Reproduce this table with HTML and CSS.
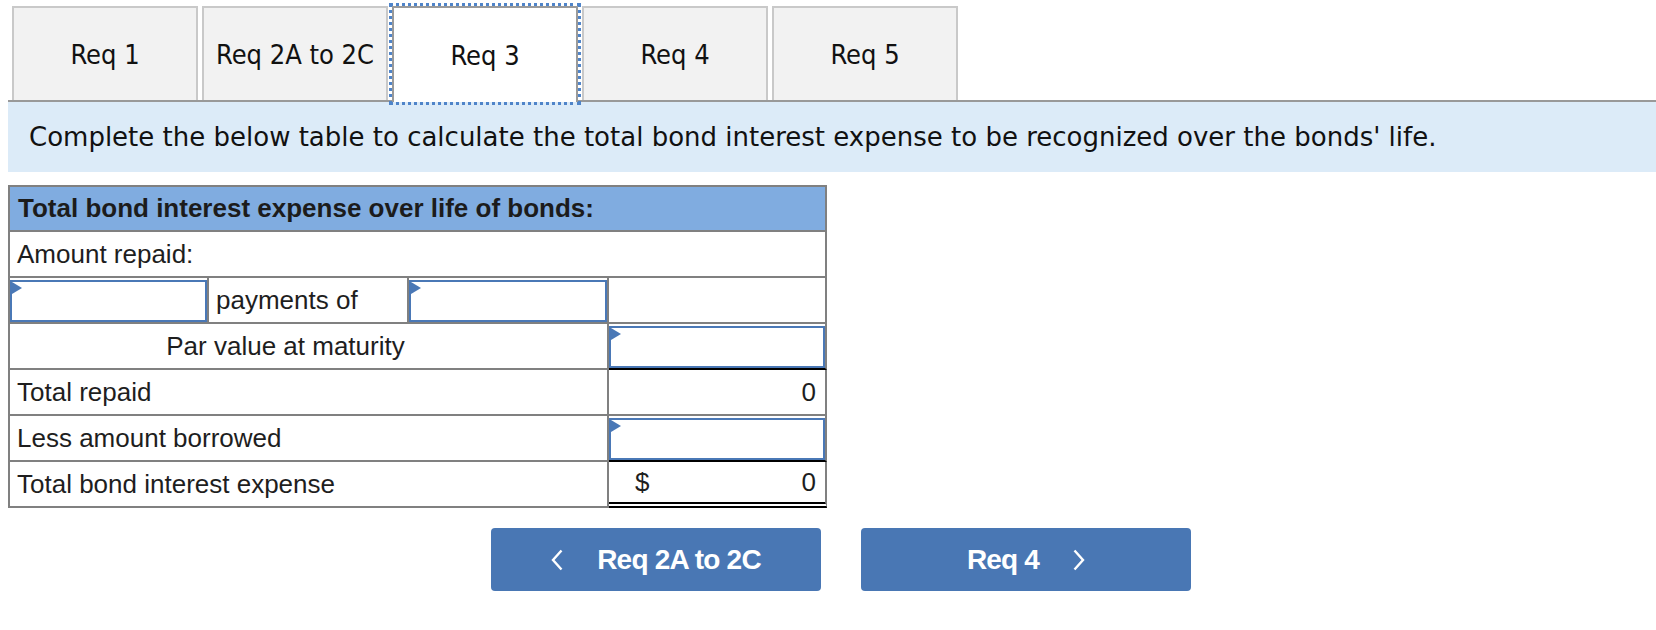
FILE: index.html
```html
<!DOCTYPE html>
<html lang="en">
<head>
<meta charset="utf-8">
<title>Req 3</title>
<link rel="stylesheet" href="styles.css">
</head>
<body>
<div class="page">
  <nav class="tabs">
    <button class="tab">Req 1</button>
    <button class="tab">Req 2A to 2C</button>
    <button class="tab active">Req 3</button>
    <button class="tab">Req 4</button>
    <button class="tab">Req 5</button>
  </nav>
  <div class="instruction">Complete the below table to calculate the total bond interest expense to be recognized over the bonds' life.</div>
  <table class="calc">
    <colgroup>
      <col class="c1"><col class="c2"><col class="c3"><col class="c4">
    </colgroup>
    <tr class="head"><th colspan="4">Total bond interest expense over life of bonds:</th></tr>
    <tr><td colspan="4" class="label">Amount repaid:</td></tr>
    <tr>
      <td class="in"><div class="input"></div></td>
      <td class="label">payments of</td>
      <td class="in"><div class="input"></div></td>
      <td class="val"></td>
    </tr>
    <tr>
      <td colspan="3" class="label center">Par value at maturity</td>
      <td class="in sum-above"><div class="input"></div></td>
    </tr>
    <tr>
      <td colspan="3" class="label">Total repaid</td>
      <td class="val num">0</td>
    </tr>
    <tr>
      <td colspan="3" class="label">Less amount borrowed</td>
      <td class="in sum-above"><div class="input"></div></td>
    </tr>
    <tr>
      <td colspan="3" class="label">Total bond interest expense</td>
      <td class="val num total"><span class="cur">$</span><span class="amt">0</span></td>
    </tr>
  </table>
  <div class="nav-buttons">
    <button class="navbtn">
      <svg class="chev" width="12" height="22" viewBox="0 0 12 22"><path d="M10.5 1.5 L2 11 L10.5 20.5" fill="none" stroke="#fff" stroke-width="2.4"/></svg>
      <span>Req 2A to 2C</span>
    </button>
    <button class="navbtn">
      <span>Req 4</span>
      <svg class="chev" width="12" height="22" viewBox="0 0 12 22"><path d="M1.5 1.5 L10 11 L1.5 20.5" fill="none" stroke="#fff" stroke-width="2.4"/></svg>
    </button>
  </div>
</div>
</body>
</html>
```

FILE: styles.css
```css
html, body {
  margin: 0;
  padding: 0;
  background: #fff;
}

.page {
  padding-left: 8px;
  font-family: "Liberation Sans", Arial, sans-serif;
  color: #1e1e1e;
}

.tabs {
  display: flex;
  align-items: flex-start;
  gap: 4px;
  padding: 6px 0 0 4px;
  height: 102px;
  box-sizing: border-box;
  border-bottom: 2px solid #999;
}

.tab {
  width: 186px;
  height: 94px;
  box-sizing: border-box;
  margin: 0;
  padding: 0;
  background: #f2f2f2;
  border: 2px solid #c9c9c9;
  border-bottom: none;
  font-family: "DejaVu Sans Condensed", "DejaVu Sans", sans-serif;
  font-stretch: condensed;
  font-size: 27px;
  color: #111;
}

.tab.active {
  background: #fff;
  border-color: #9a9a9a;
  height: 96px;
  margin-bottom: -2px;
  outline: 3px dotted #4f84c9;
  outline-offset: 0px;
  position: relative;
}

.instruction {
  height: 70px;
  line-height: 70px;
  padding-left: 21px;
  background: #dcebf8;
  font-family: "DejaVu Sans", sans-serif;
  font-size: 26px;
  color: #111;
}

.calc {
  margin-top: 13px;
  table-layout: fixed;
  border-collapse: separate;
  border-spacing: 0;
  width: 819px;
  border-top: 2px solid #808080;
  border-left: 2px solid #808080;
  font-size: 26px;
}

.c1 { width: 199px; }
.c2 { width: 200px; }
.c3 { width: 200px; }
.c4 { width: 218px; }

.calc th,
.calc td {
  border-right: 2px solid #808080;
  border-bottom: 2px solid #808080;
  padding: 0;
  box-sizing: border-box;
  vertical-align: middle;
}

.calc tr { height: 46px; }
.calc tr.head { height: 45px; }

.calc th {
  background: #80ace0;
  text-align: left;
  font-weight: bold;
  padding-left: 8px;
  color: #1c1c1c;
}

.calc td.label {
  padding-left: 7px;
  white-space: nowrap;
}

.calc td.label.center {
  text-align: center;
  padding-left: 0;
  padding-right: 46px;
}

.calc td.in {
  padding: 2px 0 0 0;
  vertical-align: top;
}

.input {
  position: relative;
  height: 42px;
  box-sizing: border-box;
  border: 2px solid #4a78b6;
  background: #fff;
}

.input::before {
  content: "";
  position: absolute;
  left: 0;
  top: 0;
  border-left: 10px solid #4a78b6;
  border-top: 6px solid transparent;
  border-bottom: 6px solid transparent;
}

.calc td.sum-above { border-bottom-color: #000; }

.calc td.num {
  text-align: right;
  padding-right: 9px;
}

.calc td.total {
  border-bottom: 6px double #000;
  text-align: left;
}

.total .cur {
  display: inline-block;
  padding-left: 26px;
}

.total .amt {
  float: right;
}

.nav-buttons {
  display: flex;
  justify-content: center;
  gap: 40px;
  margin-top: 20px;
  padding-left: 18px;
}

.navbtn {
  width: 330px;
  height: 63px;
  margin: 0;
  border: none;
  border-radius: 4px;
  background: #4977b4;
  color: #fff;
  display: flex;
  align-items: center;
  justify-content: center;
  gap: 34px;
  font-family: "Liberation Sans", Arial, sans-serif;
  font-weight: bold;
  font-size: 28px;
  letter-spacing: -0.8px;
}

.chev { display: block; }
```
